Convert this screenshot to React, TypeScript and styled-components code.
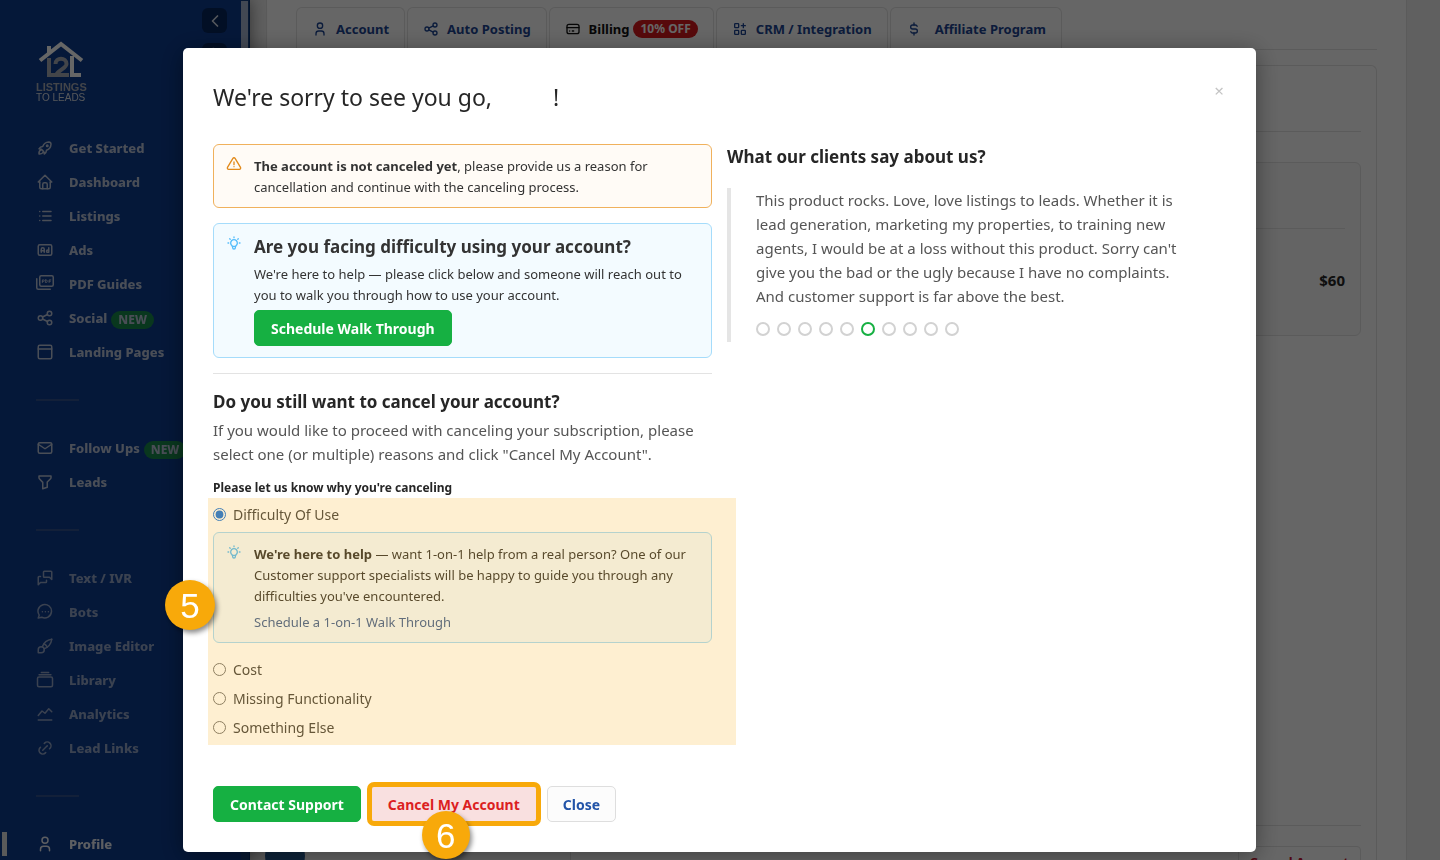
import React, { useState } from 'react';
import styled, { createGlobalStyle, css } from 'styled-components';
import {
  TbRocket, TbHome, TbList, TbAd, TbShare, TbMail, TbFilter, TbMessages,
  TbBrush, TbLink, TbUser, TbChevronLeft, TbBulb, TbAlertTriangle,
  TbCreditCard, TbApps, TbCurrencyDollar, TbSearch,
} from 'react-icons/tb';

const colors = {
  navy: '#0d3c8f',
  navItem: '#b9c3d8',
  ink: '#262626',
  muted: '#555555',
  green: '#16b042',
  amber: '#f8a90a',
  line: '#e3e3e3',
};

const GlobalStyle = createGlobalStyle`
  *, *::before, *::after { box-sizing: border-box; }
  body {
    margin: 0;
    background: #f0f0f0;
    font-family: 'Noto Sans', 'Open Sans', sans-serif;
    font-size: 15px;
    line-height: 24px;
    color: ${colors.ink};
  }
  h1, h2, h3, p, ul, fieldset, blockquote { margin: 0; padding: 0; border: 0; }
  ul { list-style: none; }
  a { text-decoration: none; }
  button { font-family: inherit; cursor: pointer; }
`;

/* ---------- application behind the dialog ---------- */

const Shell = styled.div`
  display: grid;
  grid-template-columns: 250px 1fr;
  height: 100vh;
  overflow: hidden;
`;

const Sidebar = styled.aside`
  position: relative;
  z-index: 1;
  display: flex;
  height: 100vh;
  background: ${colors.navy};
  border-right: 1px solid #06306f;
  box-shadow: 0 0 16px rgba(0, 0, 0, 0.5);
  clip-path: inset(0 -20px 0 0);
`;

const SidebarBody = styled.div`
  flex: 1;
  padding-top: 40px;
`;

const ScrollTrack = styled.div`
  width: 8px;
  padding: 1px 1px 0 0;
  background: #16407f;
`;

const ScrollThumb = styled.div`
  height: 400px;
  background: #a6b4d0;
`;

const SidebarTools = styled.div`
  position: absolute;
  top: 8px;
  right: 22px;
  display: grid;
  gap: 10px;
`;

const ToolButton = styled.button`
  display: grid;
  place-items: center;
  width: 25px;
  height: 25px;
  padding: 0;
  border: 0;
  border-radius: 6px;
  background: #07265c;
  color: #d5dbe8;
  font-size: 20px;
`;

const Logo = styled.svg`
  display: block;
  width: 54px;
  height: 62px;
  margin: 0 0 29px 35px;
`;

const NavGroup = styled.ul<{ $dim?: boolean }>`
  opacity: ${(p) => (p.$dim ? 0.78 : 1)};
`;

const NavLink = styled.a<{ $active?: boolean }>`
  position: relative;
  display: flex;
  align-items: center;
  height: 34px;
  padding-left: 36px;
  gap: 15px;
  color: ${(p) => (p.$active ? '#e8ecf4' : colors.navItem)};
  font-size: 13px;
  font-weight: 800;
  white-space: nowrap;
  svg { flex: none; font-size: 18px; }
  ${(p) => p.$active && css`
    &::before {
      content: '';
      position: absolute;
      left: 2px;
      top: 5px;
      width: 5px;
      height: 24px;
      background: #e0e0e0;
    }
  `}
`;

const NewPill = styled.span`
  margin: 4px 0 0 -11px;
  padding: 0 7px;
  border-radius: 9px;
  background: #188a4c;
  font-size: 12px;
  line-height: 18px;
`;

const NavRule = styled.hr`
  width: 43px;
  height: 2px;
  margin: 30px 0 30px 36px;
  border: 0;
  background: #30508f;
`;

const Main = styled.main`
  padding: 0 33px 0 16px;
  background: #f0f0f0;
`;

const Content = styled.div`
  display: flex;
  flex-direction: column;
  height: 100vh;
  padding: 7px 29px 0;
  border: solid ${colors.line};
  border-width: 0 1px;
  background: #fff;
`;

const Tabs = styled.nav`
  display: flex;
  gap: 2px;
  border-bottom: 1px solid ${colors.line};
`;

const Tab = styled.a<{ $active?: boolean; $spaced?: boolean }>`
  display: flex;
  align-items: center;
  gap: ${(p) => (p.$spaced ? 13 : 8)}px;
  height: 42px;
  padding: 0 15px;
  border: 1px solid ${colors.line};
  border-bottom: 0;
  border-radius: 6px 6px 0 0;
  color: ${(p) => (p.$active ? '#111' : '#1c4594')};
  font-size: 13px;
  font-weight: 700;
  white-space: nowrap;
  svg { font-size: 16px; }
`;

const OfferPill = styled.span`
  margin-left: -4px;
  padding: 0 7px;
  border-radius: 9px;
  background: #d9181c;
  color: #fff;
  font-size: 12px;
  line-height: 18px;
`;

const Card = styled.section`
  display: flex;
  flex-direction: column;
  flex: 1;
  min-height: 0;
  margin-top: 15px;
  padding: 0 15px;
  border: 1px solid ${colors.line};
  border-bottom: 0;
  border-radius: 6px 6px 0 0;
`;

const CardHead = styled.div`
  height: 66px;
  border-bottom: 1px solid ${colors.line};
`;

const Plan = styled.div`
  height: 174px;
  margin-top: 30px;
  padding: 0 15px;
  border: 1px solid ${colors.line};
  border-radius: 6px;
  background: #fafafa;
`;

const PlanHead = styled.div`
  height: 66px;
  border-bottom: 1px solid ${colors.line};
`;

const Price = styled.p`
  margin-top: 39px;
  text-align: right;
  font-weight: 700;
`;

const CardFoot = styled.div`
  display: flex;
  justify-content: space-between;
  height: 35px;
  margin-top: auto;
  border-top: 1px solid ${colors.line};
`;

const FootCell = styled.div`
  width: 259px;
  border-right: 1px solid ${colors.line};
`;

const FootButton = styled.button`
  height: 32px;
  margin-top: 20px;
  padding: 0 11px;
  border: 1px solid ${colors.line};
  border-radius: 4px;
  background: #fff;
  color: #c8102e;
  font-size: 13px;
  font-weight: 700;
`;

const ChatBubble = styled.div`
  position: fixed;
  left: 265px;
  bottom: -16px;
  width: 40px;
  height: 40px;
  border-radius: 50%;
  background: #265d96;
`;

/* ---------- dialog ---------- */

const Backdrop = styled.div`
  position: fixed;
  inset: 0;
  z-index: 10;
  padding: 48px 184px 8px 183px;
  background: rgba(0, 0, 0, 0.6);
`;

const Dialog = styled.div`
  padding: 30px;
  border-radius: 5px;
  background: #fff;
  box-shadow: 0 4px 24px rgba(0, 0, 0, 0.4);
`;

const DialogHead = styled.header`
  display: flex;
  justify-content: space-between;
  align-items: flex-start;
  margin-bottom: 28px;
`;

const Title = styled.h1`
  font-size: 23px;
  font-weight: 400;
  line-height: 38px;
`;

const Name = styled.span`
  display: inline-block;
  width: 61px;
`;

const Dismiss = styled.button`
  width: 14px;
  padding: 0;
  border: 0;
  background: none;
  color: #c4c4c4;
  font-size: 17px;
  line-height: 26px;
`;

const Columns = styled.div`
  display: grid;
  grid-template-columns: 1fr 1fr;
  gap: 15px;
`;

const Alert = styled.div<{ $tone: 'warning' | 'info' }>`
  display: grid;
  grid-template-columns: 16px 1fr;
  gap: 12px;
  padding: 11px 12px 9px;
  border: 1px solid ${(p) => (p.$tone === 'warning' ? '#f0b15c' : '#a5dcfb')};
  border-radius: 6px;
  background: ${(p) => (p.$tone === 'warning' ? '#fffbf6' : '#f3fbff')};
  color: #333;
  font-size: 13px;
  line-height: 21px;
  > svg {
    font-size: 16px;
    color: ${(p) => (p.$tone === 'warning' ? '#e28a1b' : '#54bdfb')};
  }
`;

const AlertTitle = styled.h2`
  margin-bottom: 5px;
  font-size: 17px;
  font-weight: 700;
  line-height: 24px;
`;

const Button = styled.button<{ $kind?: 'primary' | 'danger' | 'plain' }>`
  height: 36px;
  padding: 0 ${(p) => (p.$kind === 'plain' ? 15 : 16)}px;
  border: 1px solid;
  border-radius: 5px;
  font-size: 14px;
  font-weight: 700;
  white-space: nowrap;
  ${(p) => p.$kind === 'danger'
    ? css`background: #f9e0e0; border-color: #f9e0e0; color: #dc1f1f;`
    : p.$kind === 'plain'
      ? css`background: #fcfcfc; border-color: #dedede; color: #2354a8;`
      : css`background: ${colors.green}; border-color: ${colors.green}; color: #fff;`}
`;

const AlertButton = styled(Button)`
  display: block;
  margin: 4px 0 2px;
`;

const Rule = styled.hr`
  height: 1px;
  margin: 15px 0 14px;
  border: 0;
  background: ${colors.line};
`;

const SectionTitle = styled.h2`
  font-size: 17px;
  font-weight: 700;
  line-height: 28px;
`;

const Lead = styled.p`
  margin: 2px 0 12px;
  color: ${colors.muted};
`;

const Stack = styled.div`
  display: grid;
  gap: 15px;
`;

const Reasons = styled.fieldset`
  min-width: 0;
`;

const Legend = styled.legend`
  padding: 0;
  font-size: 12px;
  font-weight: 700;
  line-height: 20px;
`;

const ReasonList = styled.div`
  position: relative;
  padding: 2px 0 3px;
  &::after {
    content: '';
    position: absolute;
    inset: 0 -24px 0 -5px;
    background: rgba(248, 169, 10, 0.19);
    pointer-events: none;
  }
  ${Alert} { margin: 3px 0 12px; }
`;

const Reason = styled.label`
  display: flex;
  align-items: center;
  gap: 7px;
  height: 29px;
  color: #444;
  font-size: 14px;
  input {
    width: 13px;
    height: 13px;
    margin: 0;
    accent-color: #1a76de;
  }
`;

const AlertLink = styled.a`
  display: block;
  margin-top: 5px;
  color: #3f5f95;
`;

const Step = styled.span<{ $size: number }>`
  position: absolute;
  z-index: 2;
  display: grid;
  place-items: center;
  width: ${(p) => p.$size}px;
  height: ${(p) => p.$size}px;
  border-radius: 50%;
  background: ${colors.amber};
  box-shadow: 2px 3px 5px rgba(0, 0, 0, 0.45);
  color: #fff;
  font: 400 35px/1 'Liberation Sans', Arial, sans-serif;
  pointer-events: none;
`;

const ReasonStep = styled(Step)`
  left: -48px;
  top: 82px;
`;

const CancelStep = styled(Step)`
  left: 51px;
  top: 25px;
`;

const Actions = styled.footer`
  display: flex;
  gap: 10px;
  margin-top: 41px;
`;

const CancelFrame = styled.div`
  position: relative;
  &::after {
    content: '';
    position: absolute;
    inset: -4px;
    border: 5px solid ${colors.amber};
    border-radius: 7px;
    pointer-events: none;
  }
`;

const Testimonials = styled.section`
  ${SectionTitle} {
    margin-bottom: 18px;
    line-height: 26px;
  }
`;

const Quote = styled.blockquote`
  padding: 0 40px 6px 25px;
  border-left: 4px solid #e5e5e5;
  color: ${colors.muted};
`;

const Dots = styled.div`
  display: flex;
  gap: 7px;
  margin-top: 14px;
`;

const Dot = styled.button<{ $on: boolean }>`
  width: 14px;
  height: 14px;
  padding: 0;
  border: 2px solid ${(p) => (p.$on ? colors.green : '#d2d2d2')};
  border-radius: 50%;
  background: #fff;
`;

const LineIcon = ({ children }: { children: React.ReactNode }) => (
  <svg width="1em" height="1em" viewBox="0 0 24 24" fill="none" stroke="currentColor"
    strokeWidth="2" strokeLinecap="round" strokeLinejoin="round" aria-hidden="true">
    {children}
  </svg>
);

const PdfIcon = () => (
  <LineIcon>
    <rect x="5" y="1" width="18" height="14" rx="2" />
    <path d="M1 5v12a2 2 0 0 0 2 2h16" />
    <path strokeWidth="1.200" d="M8.500 10V6.500H10a1 1 0 0 1 0 2H8.500M12.500 6.500V10h1a1.500 1.500 0 0 0 1.500-1.500V8a1.500 1.500 0 0 0-1.500-1.500zM17.500 10V6.500h2.300M17.500 8.300h1.800" />
  </LineIcon>
);

const WindowIcon = () => (
  <LineIcon>
    <rect x="3" y="3" width="18" height="18" rx="2" />
    <path d="M3 8h18" />
  </LineIcon>
);

const BotIcon = () => (
  <LineIcon>
    <path d="M3 20l1.300-3.900A9 9 0 1 1 7.700 19z" />
    <path d="M8.500 11.500v.01M12.500 11.500v.01M16.500 11.500v.01" />
  </LineIcon>
);

const LibraryIcon = () => (
  <LineIcon>
    <rect x="2" y="8" width="20" height="13" rx="2" />
    <path strokeWidth="1.700" d="M4 5h16M7 2h10" />
  </LineIcon>
);

const AnalyticsIcon = () => (
  <LineIcon>
    <path d="M3 20h18M3 14l5-6 4 3 5-6 4 4" />
  </LineIcon>
);

type NavEntry = { label: string; icon: React.ReactNode; isNew?: boolean };

const navGroups: NavEntry[][] = [
  [
    { label: 'Get Started', icon: <TbRocket /> },
    { label: 'Dashboard', icon: <TbHome /> },
    { label: 'Listings', icon: <TbList /> },
    { label: 'Ads', icon: <TbAd /> },
    { label: 'PDF Guides', icon: <PdfIcon /> },
    { label: 'Social', icon: <TbShare />, isNew: true },
    { label: 'Landing Pages', icon: <WindowIcon /> },
  ],
  [
    { label: 'Follow Ups', icon: <TbMail />, isNew: true },
    { label: 'Leads', icon: <TbFilter /> },
  ],
  [
    { label: 'Text / IVR', icon: <TbMessages /> },
    { label: 'Bots', icon: <BotIcon /> },
    { label: 'Image Editor', icon: <TbBrush /> },
    { label: 'Library', icon: <LibraryIcon /> },
    { label: 'Analytics', icon: <AnalyticsIcon /> },
    { label: 'Lead Links', icon: <TbLink /> },
  ],
];

const reasons = ['Difficulty Of Use', 'Cost', 'Missing Functionality', 'Something Else'];

export default function App() {
  const [reason, setReason] = useState(reasons[0]);
  const [slide, setSlide] = useState(5);

  return (
    <>
      <GlobalStyle />
      <Shell>
        <Sidebar>
          <SidebarBody>
            <Logo viewBox="0 0 54 62" aria-label="Listings to Leads">
              <path d="M5 20.500 26 4l21 16.500" fill="none" stroke="#fff" strokeWidth="4" />
              <path d="M12 6h4v5l-4 4z" fill="#fff" />
              <path d="M14 18v17h8" fill="none" stroke="#a9adb6" strokeWidth="4" />
              <path d="M37 16v19h9" fill="none" stroke="#fff" strokeWidth="4" />
              <path d="M20.500 24c0-7 11-7 11 0 0 4-8 6-10.500 11h13" fill="none" stroke="#a9adb6" strokeWidth="4" />
              <g fontFamily="'Liberation Sans', sans-serif">
                <text x="1" y="51" fill="#a9adb6" fontWeight="700" fontSize="11">LISTINGS</text>
                <text x="1" y="61" fill="#d8dbe2" fontSize="10">TO LEADS</text>
              </g>
            </Logo>
            {navGroups.map((group, i) => (
              <React.Fragment key={i}>
                <NavGroup $dim={i === 2}>
                  {group.map((item) => (
                    <li key={item.label}>
                      <NavLink href="#">
                        {item.icon}
                        {item.label}
                        {item.isNew && <NewPill>NEW</NewPill>}
                      </NavLink>
                    </li>
                  ))}
                </NavGroup>
                <NavRule />
              </React.Fragment>
            ))}
            <NavLink href="#" $active><TbUser />Profile</NavLink>
          </SidebarBody>
          <ScrollTrack><ScrollThumb /></ScrollTrack>
          <SidebarTools>
            <ToolButton aria-label="Collapse menu"><TbChevronLeft /></ToolButton>
            <ToolButton aria-label="Search"><TbSearch /></ToolButton>
          </SidebarTools>
        </Sidebar>

        <Main>
          <Content>
            <Tabs>
              <Tab href="#"><TbUser />Account</Tab>
              <Tab href="#"><TbShare />Auto Posting</Tab>
              <Tab href="#" $active><TbCreditCard />Billing <OfferPill>10% OFF</OfferPill></Tab>
              <Tab href="#"><TbApps />CRM / Integration</Tab>
              <Tab href="#" $spaced><TbCurrencyDollar />Affiliate Program</Tab>
            </Tabs>
            <Card>
              <CardHead />
              <Plan>
                <PlanHead />
                <Price>$60</Price>
              </Plan>
              <CardFoot>
                <FootCell />
                <FootButton>Cancel Account</FootButton>
              </CardFoot>
            </Card>
          </Content>
        </Main>
        <ChatBubble />
      </Shell>

      <Backdrop>
        <Dialog role="dialog" aria-modal="true" aria-labelledby="dialog-title">
          <DialogHead>
            <Title id="dialog-title">We're sorry to see you go,<Name />!</Title>
            <Dismiss aria-label="Dismiss">×</Dismiss>
          </DialogHead>

          <Columns>
            <div>
              <Stack>
                <Alert $tone="warning">
                  <TbAlertTriangle />
                  <p>
                    <strong>The account is not canceled yet</strong>, please provide us a reason for
                    cancellation and continue with the canceling process.
                  </p>
                </Alert>
                <Alert $tone="info">
                  <TbBulb />
                  <div>
                    <AlertTitle>Are you facing difficulty using your account?</AlertTitle>
                    <p>
                      We're here to help — please click below and someone will reach out to you to
                      walk you through how to use your account.
                    </p>
                    <AlertButton>Schedule Walk Through</AlertButton>
                  </div>
                </Alert>
              </Stack>

              <Rule />

              <SectionTitle>Do you still want to cancel your account?</SectionTitle>
              <Lead>
                If you would like to proceed with canceling your subscription, please select one (or
                multiple) reasons and click "Cancel My Account".
              </Lead>

              <Reasons>
                <Legend>Please let us know why you're canceling</Legend>
                <ReasonList>
                  {reasons.map((label, i) => (
                    <React.Fragment key={label}>
                      <Reason>
                        <input
                          type="radio"
                          name="reason"
                          checked={reason === label}
                          onChange={() => setReason(label)}
                        />
                        {label}
                      </Reason>
                      {i === 0 && reason === label && (
                        <Alert $tone="info">
                          <TbBulb />
                          <div>
                            <p>
                              <strong>We're here to help</strong> — want 1-on-1 help from a real
                              person? One of our Customer support specialists will be happy to guide
                              you through any difficulties you've encountered.
                            </p>
                            <AlertLink href="#">Schedule a 1-on-1 Walk Through</AlertLink>
                          </div>
                        </Alert>
                      )}
                    </React.Fragment>
                  ))}
                  <ReasonStep $size={50}>5</ReasonStep>
                </ReasonList>
              </Reasons>
            </div>

            <Testimonials>
              <SectionTitle>What our clients say about us?</SectionTitle>
              <Quote>
                <p>
                  This product rocks. Love, love listings to leads. Whether it is lead generation,
                  marketing my properties, to training new agents, I would be at a loss without this
                  product. Sorry can't give you the bad or the ugly because I have no complaints.
                  And customer support is far above the best.
                </p>
                <Dots>
                  {Array.from({ length: 10 }, (_, i) => (
                    <Dot
                      key={i}
                      $on={i === slide}
                      aria-label={`Testimonial ${i + 1}`}
                      onClick={() => setSlide(i)}
                    />
                  ))}
                </Dots>
              </Quote>
            </Testimonials>
          </Columns>

          <Actions>
            <Button>Contact Support</Button>
            <CancelFrame>
              <Button $kind="danger">Cancel My Account</Button>
              <CancelStep $size={48}>6</CancelStep>
            </CancelFrame>
            <Button $kind="plain">Close</Button>
          </Actions>
        </Dialog>
      </Backdrop>
    </>
  );
}
